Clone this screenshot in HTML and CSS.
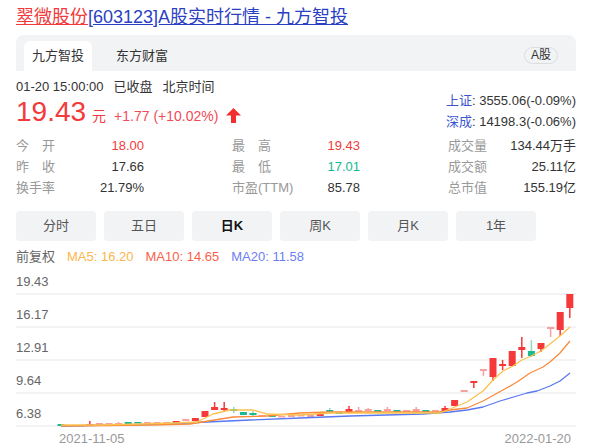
FILE: index.html
```html
<!DOCTYPE html>
<html lang="zh-cn">

<head>
  <meta charset="UTF-8">
  <link rel="stylesheet" href="styles.css">
</head>

<body>
  <div class="page">
    <h1 class="title"><a class="name" href="#">翠微股份</a><a class="sub" href="#">[603123]A股实时行情 - 九方智投</a></h1>

    <div class="tabs">
      <span class="tab active">九方智投</span>
      <span class="tab">东方财富</span>
      <span class="badge">A股</span>
    </div>

    <div class="quote">
      <div class="quote-left">
        <div class="time">01-20 15:00:00<span class="gap">已收盘</span><span class="gap">北京时间</span></div>
        <div class="price">
          <span class="big">19.43</span>
          <span class="unit">元</span>
          <span class="chg">+1.77 (+10.02%)</span>
          <svg class="arrow" width="15" height="15" viewBox="0 0 15 15"><polygon points="7.5,0 15,7.5 10,7.5 10,15 5,15 5,7.5 0,7.5" fill="#f22f2f"/></svg>
        </div>
      </div>
      <div class="index">
        <div><span class="idx-name">上证</span>: 3555.06(-0.09%)</div>
        <div><span class="idx-name">深成</span>: 14198.3(-0.06%)</div>
      </div>
    </div>

    <div class="stats">
      <div class="stat"><span class="label">今开</span><span class="up">18.00</span></div>
      <div class="stat"><span class="label">最高</span><span class="up">19.43</span></div>
      <div class="stat"><span class="label">成交量</span><span>134.44万手</span></div>
      <div class="stat"><span class="label">昨收</span><span>17.66</span></div>
      <div class="stat"><span class="label">最低</span><span class="down">17.01</span></div>
      <div class="stat"><span class="label">成交额</span><span>25.11亿</span></div>
      <div class="stat"><span class="label">换手率</span><span>21.79%</span></div>
      <div class="stat"><span class="label">市盈(TTM)</span><span>85.78</span></div>
      <div class="stat"><span class="label">总市值</span><span>155.19亿</span></div>
    </div>

    <div class="periods">
      <span class="period">分时</span>
      <span class="period">五日</span>
      <span class="period on">日K</span>
      <span class="period">周K</span>
      <span class="period">月K</span>
      <span class="period">1年</span>
    </div>

    <div class="legend">
      <span class="fq">前复权</span>
      <span class="ma5">MA5: 16.20</span>
      <span class="ma10">MA10: 14.65</span>
      <span class="ma20">MA20: 11.58</span>
    </div>

    <svg class="chart" width="560" height="160" viewBox="16 268 560 160">
      <g class="grid">
        <rect x="16" y="289" width="560" height="2"/>
        <rect x="16" y="322" width="560" height="2"/>
        <rect x="16" y="355" width="560" height="2"/>
        <rect x="16" y="388" width="560" height="2"/>
        <rect x="16" y="421" width="560" height="2"/>
      </g>
      <g class="ylabels">
        <text x="16" y="282">19.43</text>
        <text x="16" y="315">16.17</text>
        <text x="16" y="348">12.91</text>
        <text x="16" y="381">9.64</text>
        <text x="16" y="414">6.38</text>
      </g>
      <g id="candles"></g>
      <polyline class="line ma20" points="61,422 167,420 207,418 250,416 300,414 350,412 423,410 450,408 467,406 483,403 500,397 517,392 527,389 537,387 550,382 560,377 570,369"/>
      <polyline class="line ma10" points="61,422 150,421 190,420 233,413 267,412 300,409 330,408 400,408 440,408 450,406 467,404 483,397 503,386 517,378 530,369 543,363 550,358 560,349 570,337"/>
      <polyline class="line ma5" points="61,421 100,421 140,420 175,419 197,418 213,410 230,406 253,406 267,410 300,411 330,409 360,409 400,409 440,409 450,405 467,398 483,387 493,376 503,367 513,362 522,356 531,352 541,347 550,340 560,332 570,323"/>
    </svg>

    <div class="dates">
      <span>2021-11-05</span>
      <span>2022-01-20</span>
    </div>
  </div>

<script type="text/javascript">
/* 日K数据：序号, 颜色, 实体上沿, 实体下沿, 影线上端, 影线下端 (像素) */
var candles=[
  [0,"g",420,422],[1,"p",421,422],[2,"p",421,422],[3,"r",420,422,417,422],
  [4,"p",419,421],[5,"p",419,421],[6,"p",419,420,418,420],[7,"g",418,420],
  [8,"g",418,419],[9,"p",418,419],[10,"p",418,419],[11,"p",418,419],
  [12,"r",417,419],[13,"p",415,417],[14,"r",414,417],[15,"r",407,413],
  [16,"r",403,406,398,406],[17,"r",404,406,398,408],[18,"g",405,407,403,409],[19,"g",408,411],
  [20,"g",409,411,407,412],[21,"p",411,412],[22,"g",411,413],[23,"p",412,413],
  [24,"p",411,413],[25,"p",411,412],[26,"p",411,413],[27,"r",408,412],
  [28,"g",406,408,404,410],[29,"g",408,410],[30,"r",405,409,402,409],[31,"p",406,408,403,408],
  [32,"p",405,407,404,407],[33,"g",406,408],[34,"p",405,407,403,407],[35,"g",406,408],
  [36,"p",406,408],[37,"p",405,408,403,408],[38,"g",406,408],[39,"p",406,407],
  [40,"r",404,407,402,407],[41,"r",396,402],[42,"p",386,388],[43,"r",377,379,377,384],
  [44,"p",365,367,365,372],[45,"r",354,373,354,377],[46,"r",360,362,356,366],[47,"r",347,362],
  [48,"r",343,346,333,354],[49,"g",347,352,336,353],[50,"r",339,345,339,348],[51,"p",323,325,323,333],
  [52,"r",308,326,308,332],[53,"r",290,304,290,314]
];
var colors={r:"#f5393b",p:"#f6a0a0",g:"#1bb894"};
var wickColors={r:"#f5393b",p:"#f6a0a0",g:"#8fd9c6"};

window.onload=function(){
  var box=document.getElementById("candles");
  var ns="http://www.w3.org/2000/svg";
  for(var i=0;i<candles.length;i++){
    var c=candles[i];
    var x=61+9.6*c[0];
    if(c.length>4){
      var w=document.createElementNS(ns,"rect");
      w.setAttribute("x",x-0.75);
      w.setAttribute("y",c[4]);
      w.setAttribute("width",1.5);
      w.setAttribute("height",c[5]-c[4]);
      w.setAttribute("fill",wickColors[c[1]]);
      box.appendChild(w);
    }
    var b=document.createElementNS(ns,"rect");
    b.setAttribute("x",x-3.5);
    b.setAttribute("y",c[2]);
    b.setAttribute("width",7);
    b.setAttribute("height",Math.max(c[3]-c[2],1.5));
    b.setAttribute("fill",colors[c[1]]);
    box.appendChild(b);
  }
}
</script>
</body>
</html>
```

FILE: styles.css
```css
*{
	box-sizing:border-box;
}
body{
	margin:0;
	font-family:"Liberation Sans","Noto Sans CJK SC",sans-serif;
	font-size:13px;
	color:#333;
}
.page{
	width:593px;
	padding:4px 17px 0 16px;
}
.title{
	margin:0;
	font-size:18px;
	font-weight:normal;
	line-height:26px;
}
.title a{
	text-decoration:underline;
}
.title .name{color:#f0393b;}
.title .sub{color:#2b3fc2;}

.tabs{
	display:flex;
	align-items:flex-end;
	height:36px;
	margin-top:5px;
	padding:0 18px 0 8px;
	background:#f2f3f5;
	border-radius:8px 8px 0 0;
}
.tab{
	height:30px;
	line-height:30px;
	padding:0 8px;
	color:#333;
}
.tab + .tab{margin-left:16px;}
.tab.active{
	background:#fff;
	border-radius:6px 6px 0 0;
}
.badge{
	margin-left:auto;
	margin-bottom:7px;
	height:17px;
	line-height:15px;
	padding:0 6px;
	font-size:12px;
	border:1px solid #dcdde0;
	border-radius:9px;
}

.quote{
	display:flex;
	justify-content:space-between;
	align-items:flex-end;
	margin-top:7px;
}
.time{line-height:18px;}
.time .gap{margin-left:10px;}
.price{
	display:flex;
	align-items:baseline;
	line-height:32px;
	color:#f23b3b;
}
.price .big{font-size:28px;}
.price .unit{font-size:14px;margin-left:6px;}
.price .chg{font-size:14px;margin-left:8px;color:#f24a56;}
.price .arrow{align-self:center;margin-left:8px;margin-top:2px;}
.index{
	line-height:21px;
	text-align:right;
}
.idx-name{color:#3d56d0;}

.stats{
	display:grid;
	grid-template-columns:repeat(3,128px);
	justify-content:space-between;
	row-gap:1px;
	margin-top:4px;
	line-height:20px;
}
.stat{
	display:flex;
	justify-content:space-between;
}
.stat .label{
	min-width:39px;
	color:#999;
	text-align-last:justify;
}
.up{color:#f23b3b;}
.down{color:#14b891;}

.periods{
	display:flex;
	gap:8px;
	margin-top:13px;
}
.period{
	width:80px;
	height:30px;
	line-height:30px;
	text-align:center;
	background:#f2f3f5;
	border-radius:4px;
	color:#555;
}
.period.on{
	color:#111;
	font-weight:bold;
}

.legend{
	display:flex;
	gap:12px;
	margin-top:7px;
	line-height:18px;
}
.fq{color:#666;}
.ma5{color:#fbb64c;}
.ma10{color:#fa5f4a;}
.ma20{color:#6d7ff0;}

.chart{
	display:block;
	margin-top:6px;
}
.grid rect{fill:#f3f3f4;}
.ylabels text{
	font-size:13px;
	fill:#666;
}
.line{
	fill:none;
	stroke-width:1.3;
	stroke-linejoin:round;
}
.line.ma5{stroke:#fbc24e;}
.line.ma10{stroke:#fa8a3c;}
.line.ma20{stroke:#5a78f0;}

.dates{
	display:flex;
	justify-content:space-between;
	padding:0 5px 0 43px;
	line-height:14px;
	color:#999;
}
```
